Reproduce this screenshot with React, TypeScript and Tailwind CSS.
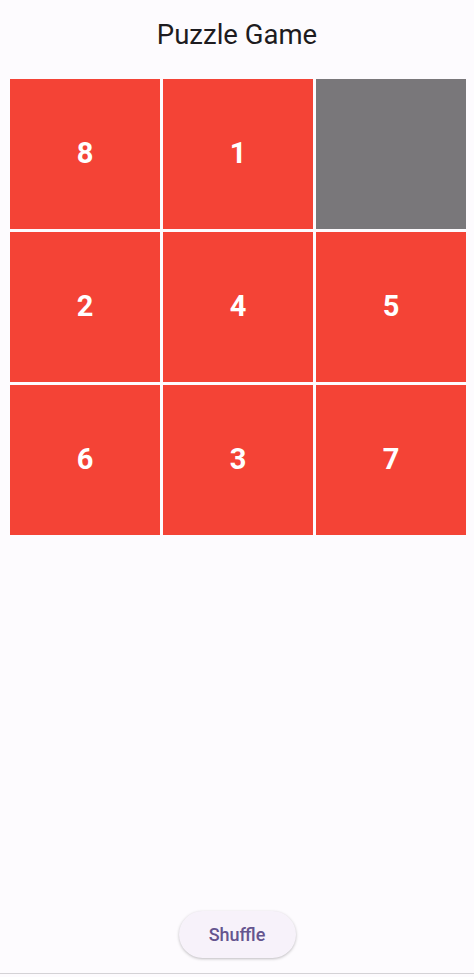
import React from "react";

const tiles = [8, 1, 0, 2, 4, 5, 6, 3, 7];

export default function App() {
  return (
    <div
      className="h-[977px] w-full flex flex-col bg-[#fdfbfe]"
      style={{ fontFamily: "Roboto, 'Noto Sans', sans-serif" }}
    >
      {/* App bar */}
      <header className="h-[69px] flex items-center justify-center">
        <h1 className="text-[27.5px] text-[#1d1b20] font-normal">Puzzle Game</h1>
      </header>

      {/* Board */}
      <div className="pl-[10px] pt-[10px]">
        <div className="w-[456px] grid grid-cols-3 gap-[3px]">
          {tiles.map((n, i) =>
            n === 0 ? (
              <div key={i} className="h-[150px] bg-[#79777a]" />
            ) : (
              <div
                key={i}
                className="h-[150px] bg-[#f44336] flex items-center justify-center text-white text-[29px] font-bold"
              >
                {n}
              </div>
            ),
          )}
        </div>
      </div>

      <div className="flex-1" />

      {/* Shuffle */}
      <div className="flex justify-center pb-[15px]">
        <button
          type="button"
          className="h-[47px] w-[117px] rounded-full bg-[#f7f2fa] text-[#65558f] text-[18px] font-medium shadow-[0_1px_3px_rgba(0,0,0,0.25)]"
        >
          Shuffle
        </button>
      </div>
      <div className="h-px bg-[#d4d2d6]" />
      <div className="h-[3px]" />
    </div>
  );
}
